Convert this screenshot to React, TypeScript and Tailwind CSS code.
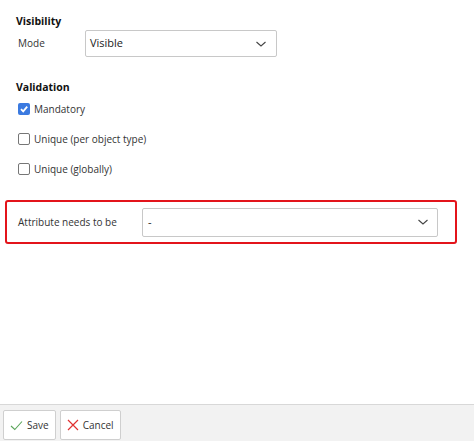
import { useState } from 'react';

const Chevron = () => (
  <svg width="12" height="8" viewBox="0 0 12 8" className="shrink-0">
    <path d="M1.5 2 L6 6 L10.5 2" fill="none" stroke="#444" strokeWidth="1.1" />
  </svg>
);

const Check = ({ on, label }: { on: boolean; label: string }) => (
  <label className="flex items-center gap-[4px] h-[14px]">
    {on ? (
      <span className="w-[12px] h-[12px] rounded-[2px] bg-[#3b7ae0] flex items-center justify-center">
        <svg width="10" height="10" viewBox="0 0 10 10">
          <path d="M2 5.2 L4.2 7.4 L8.2 2.6" fill="none" stroke="#fff" strokeWidth="1.8" />
        </svg>
      </span>
    ) : (
      <span className="w-[12px] h-[12px] rounded-[2px] border border-[#767676] bg-white" />
    )}
    <span className="text-[#333]">{label}</span>
  </label>
);

const App = () => {
  const [checks] = useState({ mandatory: true, perType: false, global: false });

  return (
    <div className="w-[474px] h-[441px] bg-white flex flex-col text-[10px] text-[#333] font-['Open_Sans',sans-serif]">
      <div className="flex-1 pl-[16px] pt-[13px]">
        {/* Visibility */}
        <h3 className="font-bold text-[10.5px] text-[#111] leading-[16px]">Visibility</h3>
        <div className="flex items-center mt-[1px]">
          <span className="w-[69px] pl-[2px]">Mode</span>
          <div className="w-[192px] h-[27px] border border-[#c8c8c8] rounded-[2px] flex items-center justify-between pl-[4px] pr-[9px] text-[11px] text-[#222]">
            <span>Visible</span>
            <Chevron />
          </div>
        </div>

        {/* Validation */}
        <h3 className="font-bold text-[10.5px] text-[#111] leading-[16px] mt-[22px]">Validation</h3>
        <div className="flex flex-col gap-[16px] mt-[7px] pl-[2px]">
          <Check on={checks.mandatory} label="Mandatory" />
          <Check on={checks.perType} label="Unique (per object type)" />
          <Check on={checks.global} label="Unique (globally)" />
        </div>
      </div>

      {/* Highlighted attribute row */}
      <div className="mx-[5px] mt-[2px] mb-[160px] w-[452px] h-[44px] border-2 border-[#e3141b] rounded-[3px] flex items-center pl-[11px] pr-[17px]">
        <span className="w-[124px]">Attribute needs to be</span>
        <div className="flex-1 h-[29px] border border-[#c8c8c8] rounded-[2px] flex items-center justify-between pl-[5px] pr-[8px] text-[11px] text-[#222]">
          <span>-</span>
          <Chevron />
        </div>
      </div>

      {/* Footer */}
      <div className="h-[37px] border-t border-[#d8d8d8] bg-[#f2f2f2] flex items-end gap-[4px] pl-[3px] pb-[1px]">
        <button className="h-[30px] pl-[6px] pr-[6px] border border-[#cfcfcf] rounded-[2px] bg-white flex items-center gap-[4px] text-[10px] text-[#333]">
          <svg width="13" height="11" viewBox="0 0 13 11">
            <path d="M1 6 L4.8 9.5 L12 1.5" fill="none" stroke="#5aa55a" strokeWidth="1.1" />
          </svg>
          Save
        </button>
        <button className="h-[30px] pl-[6px] pr-[6px] border border-[#cfcfcf] rounded-[2px] bg-white flex items-center gap-[4px] text-[10px] text-[#333]">
          <svg width="12" height="12" viewBox="0 0 12 12">
            <path d="M1 1 L11 11 M11 1 L1 11" fill="none" stroke="#e03030" strokeWidth="1.2" />
          </svg>
          Cancel
        </button>
      </div>
    </div>
  );
};

export default App;
